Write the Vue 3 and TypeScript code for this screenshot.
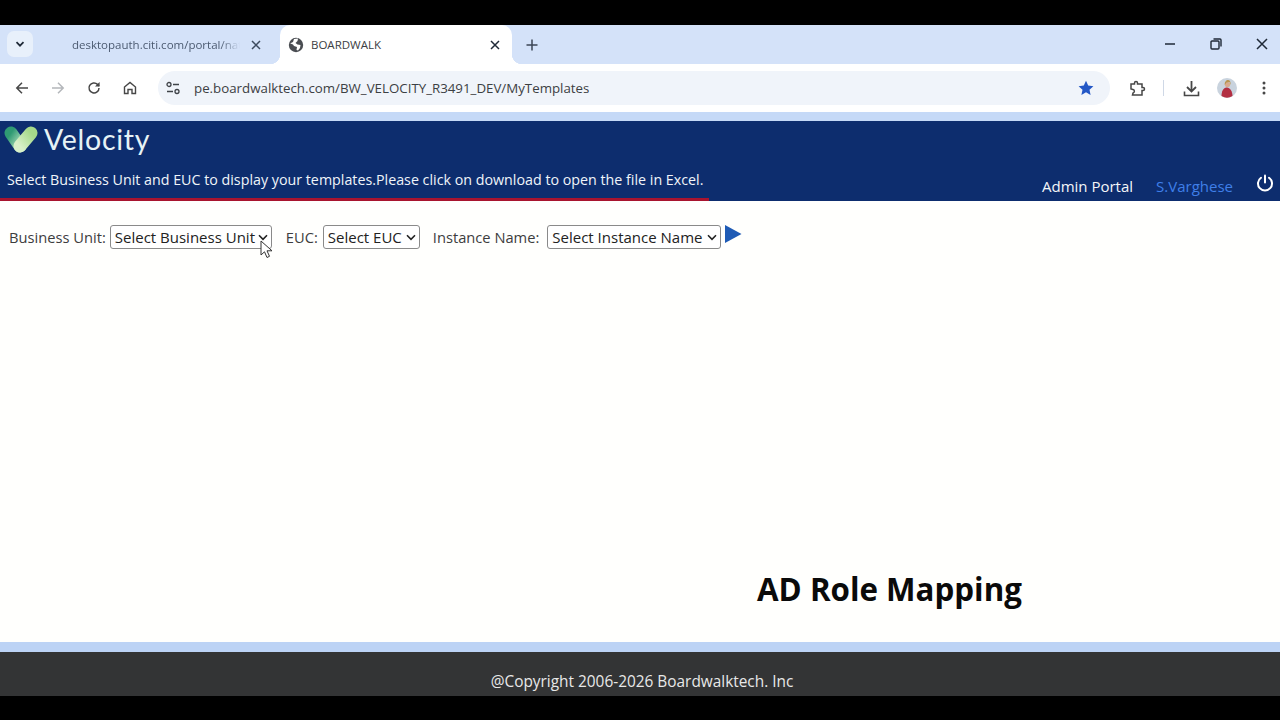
<template>
  <div class="screen">
    <div class="tabstrip">
      <div class="tab-search">
        <svg width="12" height="12" viewBox="0 0 12 12"><path d="M2.5 4.2 6 7.7l3.5-3.5" fill="none" stroke="#1f2937" stroke-width="1.7" /></svg>
      </div>
      <div class="tab tab--idle">
        <span class="tab-title tab-title--fade">desktopauth.citi.com/portal/nat</span>
        <svg class="tab-close" width="12" height="12" viewBox="0 0 12 12"><path d="M2 2l8 8M10 2l-8 8" stroke="#3c4a5e" stroke-width="1.5" /></svg>
      </div>
      <div class="tab tab--active">
        <svg class="globe" width="16" height="16" viewBox="0 0 16 16">
          <circle cx="8" cy="8" r="7.2" fill="#4a4d52" />
          <path d="M2 6.5 5 5l1-3 4-.5-.5 2.500L7.500 6l2 1.500 3 .5-.5 3-2 2.500-1.500-.5.5-3-3-1-1-1.500-2.500-1z" fill="#fff" />
        </svg>
        <span class="tab-title">BOARDWALK</span>
        <svg class="tab-close" width="12" height="12" viewBox="0 0 12 12"><path d="M2 2l8 8M10 2l-8 8" stroke="#1f2937" stroke-width="1.5" /></svg>
      </div>
      <svg class="new-tab" width="12" height="12" viewBox="0 0 12 12"><path d="M6 .5v11M.5 6h11" stroke="#3c4656" stroke-width="1.5" /></svg>
      <div class="win-btns">
        <svg width="12" height="12" viewBox="0 0 12 12"><path d="M1 6h10" stroke="#1f2937" stroke-width="1.5" /></svg>
        <svg width="12" height="12" viewBox="0 0 12 12"><rect x="1" y="3" width="8" height="8" rx="1" fill="none" stroke="#1f2937" stroke-width="1.4" /><path d="M3.500 1h6.500a1 1 0 0 1 1 1v6.500" fill="none" stroke="#1f2937" stroke-width="1.4" /></svg>
        <svg width="12" height="12" viewBox="0 0 12 12"><path d="M1 1l10 10M11 1 1 11" stroke="#1f2937" stroke-width="1.5" /></svg>
      </div>
    </div>

    <div class="toolbar">
      <div class="nav-btns">
        <svg width="14" height="14" viewBox="0 0 14 14"><path d="M13 7H1.800M7 1.800 1.800 7 7 12.200" fill="none" stroke="#474747" stroke-width="1.500" /></svg>
        <svg width="14" height="14" viewBox="0 0 14 14"><path d="M1 7h11.200M7 1.800 12.200 7 7 12.200" fill="none" stroke="#b4b7bb" stroke-width="1.500" /></svg>
        <svg width="14" height="14" viewBox="0 0 14 14"><path d="M12 7a5 5 0 1 1-1.500-3.600L12 5" fill="none" stroke="#474747" stroke-width="1.500" /><path d="M12.600 1v4.600H8z" fill="#474747" /></svg>
        <svg width="14" height="14" viewBox="0 0 14 14"><path d="M1.500 6 7 1.500 12.500 6v6.500h-3.500V8.500H5v4H1.500z" fill="none" stroke="#474747" stroke-width="1.400" /></svg>
      </div>
      <div class="omnibox">
        <svg width="16" height="14" viewBox="0 0 16 14">
          <circle cx="4" cy="3.500" r="2" fill="none" stroke="#3f4348" stroke-width="1.300" />
          <path d="M8 3.500h6M2 10.500h6" stroke="#3f4348" stroke-width="1.300" />
          <circle cx="12" cy="10.500" r="2" fill="none" stroke="#3f4348" stroke-width="1.300" />
        </svg>
        <span class="url">pe.boardwalktech.com/BW_VELOCITY_R3491_DEV/MyTemplates</span>
        <svg class="star" width="16" height="16" viewBox="0 0 16 16"><path d="M8 .8l2.200 4.800 5.200.6-3.900 3.500 1.100 5.200L8 12.300l-4.600 2.600 1.100-5.200L.6 6.200l5.200-.6z" fill="#2357c6" /></svg>
      </div>
      <div class="toolbar-right">
        <svg class="ext" width="17" height="17" viewBox="0 0 17 17"><path d="M2 4h3.500V3a1.500 1.500 0 0 1 3 0v1H13v3.500h1a1.500 1.500 0 0 1 0 3h-1V15H3.500l.5-2a1.800 1.800 0 0 0 0-3.500L2 9z" fill="none" stroke="#474747" stroke-width="1.500" /></svg>
        <span class="sep"></span>
        <svg class="dl" width="17" height="17" viewBox="0 0 17 17"><path d="M8.500 1v10M4 7l4.500 4.500L13 7" fill="none" stroke="#474747" stroke-width="1.800" /><path d="M1.500 11.500v4h14v-4" fill="none" stroke="#474747" stroke-width="1.600" /></svg>
        <svg class="avatar" width="20" height="20" viewBox="0 0 20 20">
          <circle cx="10" cy="10" r="10" fill="#c9d3de" />
          <path d="M4.500 18c0-5 2-8 5-8.500 3-.5 6 3.500 6 8.500a10 10 0 0 1-11 0z" fill="#b22f42" />
          <circle cx="10.500" cy="6.500" r="2.600" fill="#d9ab8e" />
          <path d="M7.800 7c-.5-3 1.500-5 3.200-5 2 0 3 2 2.500 5l-1-3-3 .5z" fill="#b9944f" />
        </svg>
        <svg class="dots" width="4" height="14" viewBox="0 0 4 14"><circle cx="2" cy="2" r="1.500" fill="#474747" /><circle cx="2" cy="7" r="1.500" fill="#474747" /><circle cx="2" cy="12" r="1.500" fill="#474747" /></svg>
      </div>
    </div>

    <div class="page">
      <header class="app-header">
        <div class="brand">
          <svg width="36" height="30" viewBox="0 0 36 30">
            <defs>
              <linearGradient id="heartL" x1="0" y1="0" x2="1" y2="1"><stop offset="0" stop-color="#2f9a73" /><stop offset="1" stop-color="#b8e4c0" /></linearGradient>
              <linearGradient id="heartR" x1="1" y1="0" x2="0" y2="1"><stop offset="0" stop-color="#a5d98a" /><stop offset="1" stop-color="#d8f0c8" /></linearGradient>
            </defs>
            <path d="M8 8 17 21" fill="none" stroke="url(#heartL)" stroke-width="13" stroke-linecap="round" />
            <path d="M28 8 17 21" fill="none" stroke="url(#heartR)" stroke-width="13" stroke-linecap="round" />
          </svg>
          <span class="brand-name">Velocity</span>
        </div>
        <div class="header-row">
          <div class="notice">Select Business Unit and EUC to display your templates.Please click on download to open the file in Excel.</div>
          <nav class="user-nav">
            <span>Admin Portal</span>
            <span class="user-name">S.Varghese</span>
            <svg class="power" width="18" height="18" viewBox="0 0 18 18"><path d="M5 3.800a7 7 0 1 0 8 0" fill="none" stroke="#fff" stroke-width="2" stroke-linecap="round" /><path d="M9 1.500v7" stroke="#fff" stroke-width="2" stroke-linecap="round" /></svg>
          </nav>
        </div>
      </header>

      <main class="content">
        <form class="filters" @submit.prevent>
          <label class="filter" v-for="f in filters" :key="f.label" :style="{ marginRight: f.gap + 'px', columnGap: f.labelGap + 'px' }">
            <span class="filter-label">{{ f.label }}</span>
            <span class="select-wrap" :style="{ width: f.width + 'px' }">
              <select class="select">
                <option>{{ f.placeholder }}</option>
              </select>
              <svg class="chevron" width="10" height="7" viewBox="0 0 10 7"><path d="M1 1.300 5 5.300l4-4" fill="none" stroke="#222" stroke-width="1.600" /></svg>
            </span>
          </label>
          <svg class="go" width="17" height="20" viewBox="0 0 17 20"><path d="M0 1 16.500 10 0 19z" fill="#1f5bb5" /></svg>
        </form>
        <svg class="cursor" width="13" height="19" viewBox="0 0 13 19"><path d="M1 1v14l3.500-3.200L7 17.500l2.500-1.200L7 10.800h5z" fill="#fff" stroke="#333" stroke-width="1" /></svg>
        <div class="caption">AD Role Mapping</div>
      </main>

      <div class="footer-strip"></div>
      <footer class="app-footer">@Copyright 2006-2026 Boardwalktech. Inc</footer>
    </div>
  </div>
</template>

<script setup lang="ts">
interface Filter {
  label: string;
  placeholder: string;
  width: number;
  labelGap: number;
  gap: number;
}

const filters: Filter[] = [
  { label: 'Business Unit:', placeholder: 'Select Business Unit', width: 162, labelGap: 4, gap: 14 },
  { label: 'EUC:', placeholder: 'Select EUC', width: 97, labelGap: 5, gap: 13 },
  { label: 'Instance Name:', placeholder: 'Select Instance Name', width: 174, labelGap: 8, gap: 4 }
];
</script>

<style scoped>
.screen {
  width: 1280px;
  height: 720px;
  background: #000;
  padding: 25px 0 24px;
  box-sizing: border-box;
  display: flex;
  flex-direction: column;
  font-family: "Open Sans", "Noto Sans", sans-serif;
  overflow: hidden;
}
.tabstrip {
  height: 39px;
  background: #d4e2f9;
  display: flex;
  align-items: flex-end;
  flex-shrink: 0;
}
.tab-search {
  width: 26px;
  height: 26px;
  margin: 0 0 7px 7px;
  background: #e8f0fb;
  border-radius: 7px;
  display: flex;
  align-items: center;
  justify-content: center;
}
.tab {
  height: 39px;
  display: flex;
  align-items: center;
  font-size: 12px;
  box-sizing: border-box;
}
.tab--idle {
  width: 247px;
  padding-left: 39px;
  color: #4b5a70;
}
.tab--active {
  position: relative;
  width: 232px;
  background: #fff;
  border-radius: 10px 10px 0 0;
  padding-left: 8px;
  color: #3c4043;
}
.tab--active::before,
.tab--active::after {
  content: "";
  position: absolute;
  bottom: 0;
  width: 10px;
  height: 10px;
}
.tab--active::before {
  left: -10px;
  background: radial-gradient(circle at 0 0, transparent 10px, #fff 10.500px);
}
.tab--active::after {
  right: -10px;
  background: radial-gradient(circle at 100% 0, transparent 10px, #fff 10.500px);
}
.tab-title {
  white-space: nowrap;
  font-size: 11.500px;
}
.tab--idle .tab-title {
  width: 168px;
}
.tab--active .tab-title {
  width: 173px;
  margin-left: 7px;
}
.tab-title--fade {
  -webkit-mask-image: linear-gradient(90deg, #000 88%, transparent);
  mask-image: linear-gradient(90deg, #000 88%, transparent);
}
.tab-close {
  margin-left: 10px;
}
.tab--active .tab-close {
  margin-left: 5px;
}
.new-tab {
  margin: 0 0 13px 14px;
}
.win-btns {
  margin: 0 0 14px auto;
  padding-right: 12px;
  display: flex;
  gap: 34px;
}
.toolbar {
  height: 48px;
  background: #fff;
  display: flex;
  align-items: center;
  flex-shrink: 0;
}
.nav-btns {
  width: 158px;
  padding-left: 15px;
  box-sizing: border-box;
  display: flex;
  gap: 22px;
}
.omnibox {
  width: 952px;
  height: 34px;
  background: #f0f4fa;
  border-radius: 17px;
  display: flex;
  align-items: center;
  padding: 0 16px 0 7px;
  box-sizing: border-box;
}
.url {
  margin: -1px 0 0 13px;
  font-size: 13.300px;
  color: #3c4043;
  white-space: nowrap;
}
.star {
  margin-left: auto;
}
.toolbar-right {
  flex: 1;
  display: flex;
  align-items: center;
  padding-left: 19px;
}
.sep {
  width: 1px;
  height: 16px;
  background: #cfd8e6;
  margin-left: 17px;
}
.dl {
  margin-left: 19px;
}
.avatar {
  margin-left: 17px;
}
.dots {
  margin-left: 25px;
}
.page {
  flex: 1;
  background: #fffffd;
  border-top: 9px solid #c5d9f7;
  display: flex;
  flex-direction: column;
  min-height: 0;
}
.app-header {
  height: 80px;
  background: #0d2d6e;
  display: flex;
  flex-direction: column;
  flex-shrink: 0;
}
.brand {
  height: 37px;
  padding: 1px 0 0 3px;
  display: flex;
  align-items: center;
  box-sizing: border-box;
}
.brand-name {
  margin: -2px 0 0 5px;
  font-family: "Lato", sans-serif;
  font-size: 28.500px;
  letter-spacing: 0.700px;
  color: #e6f3f6;
}
.header-row {
  flex: 1;
  display: flex;
  justify-content: space-between;
  align-items: flex-end;
}
.notice {
  height: 37px;
  width: 709px;
  padding: 6px 0 0 7px;
  box-sizing: border-box;
  border-bottom: 3px solid #a8142f;
  font-size: 14.280px;
  line-height: 20px;
  white-space: nowrap;
  color: #f0f5fa;
}
.user-nav {
  display: flex;
  align-items: center;
  gap: 23px;
  padding: 0 6px 5px 0;
  font-size: 15px;
  color: #f4f6f8;
}
.user-name {
  color: #3f7fe8;
}
.power {
  margin-top: -7px;
}
.content {
  flex: 1;
  position: relative;
  min-height: 0;
}
.filters {
  display: flex;
  align-items: center;
  padding: 24px 0 0 9px;
  font-size: 15px;
  color: #3d3d3d;
}
.filter {
  display: flex;
  align-items: center;
  white-space: nowrap;
}
.filter-label {
  font-size: 14.700px;
}
.select-wrap {
  position: relative;
  display: block;
  height: 24px;
}
.select {
  appearance: none;
  width: 100%;
  height: 100%;
  border: 1px solid #8a8a8a;
  border-radius: 3px;
  background: #fff;
  padding: 0 0 0 4px;
  font: inherit;
  color: #222;
}
.chevron {
  position: absolute;
  right: 4px;
  top: 9px;
}
.go {
  margin-top: -6px;
}
.cursor {
  position: absolute;
  left: 260px;
  top: 39px;
}
.caption {
  position: absolute;
  left: 757px;
  top: 368px;
  font-size: 31.300px;
  line-height: 40px;
  font-weight: 700;
  color: #0a0a0a;
}
.footer-strip {
  height: 10px;
  background: #bcd3f5;
  flex-shrink: 0;
}
.app-footer {
  height: 44px;
  background: #333435;
  color: #e8e8e8;
  font-size: 15.400px;
  line-height: 20px;
  padding: 20px 0 0 4px;
  box-sizing: border-box;
  text-align: center;
  flex-shrink: 0;
}
</style>
